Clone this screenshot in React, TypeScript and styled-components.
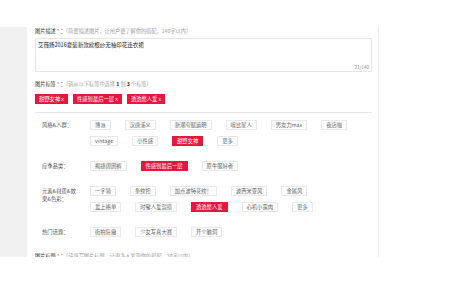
import styled, { createGlobalStyle } from "styled-components";

const GlobalStyle = createGlobalStyle`
    html, body {
        margin: 0;
        padding: 0;
        background: #ffffff;
    }
    body {
        font-family: "Noto Sans CJK SC", "Noto Sans", sans-serif;
        color: #444444;
    }
`;

const Page = styled.div`
    padding-top: 27px;
`;

const Frame = styled.div`
    display: flex;
    width: 379px;
    height: 230px;
    overflow: hidden;
`;

const Sidebar = styled.div`
    width: 27px;
    flex-shrink: 0;
    background-color: #f1f1f1;
`;

const Main = styled.div`
    flex: 1;
    padding: 0 6px 0 8px;
    border-right: 1px solid #ececec;
    box-sizing: border-box;
`;

const FieldLabel = styled.div<{ $top?: number }>`
    margin-top: ${(p) => p.$top ?? 0}px;
    font-size: 5.2px;
    line-height: 8px;
    color: #333333;
    white-space: nowrap;
`;

const Star = styled.span`
    color: #e4393c;
`;

const Hint = styled.span`
    color: #a0a0a0;
`;

const Strong = styled.b`
    color: #222222;
`;

const TextBox = styled.div`
    margin-top: 3px;
    height: 34px;
    border: 1px solid #e6e6e6;
    box-sizing: border-box;
    padding: 2px 2px 1px 2px;
    display: flex;
    flex-direction: column;
    justify-content: space-between;
`;

const BoxText = styled.div`
    font-size: 5.5px;
    line-height: 8px;
    color: #222222;
`;

const Counter = styled.div`
    align-self: flex-end;
    font-size: 4.6px;
    line-height: 6px;
    color: #888888;
`;

const Picked = styled.div`
    display: flex;
    gap: 5px;
    margin-top: 6px;
    padding-bottom: 8px;
    border-bottom: 1px solid #e8e8e8;
`;

const Tag = styled.span<{ $on?: boolean; $more?: boolean }>`
    display: inline-flex;
    align-items: center;
    height: 10px;
    padding: 0 4px;
    box-sizing: border-box;
    border: 1px solid ${(p) => (p.$on ? "#e5173f" : "#e9e9e9")};
    background-color: ${(p) => (p.$on ? "#e5173f" : "#ffffff")};
    color: ${(p) => (p.$on ? "#ffffff" : p.$more ? "#5a7fb8" : "#5c5c5c")};
    font-size: 5.3px;
    white-space: nowrap;
`;

const PickedTag = styled(Tag)`
    padding: 0 3px;
`;

const Sections = styled.div`
    display: flex;
    flex-direction: column;
    gap: 15px;
    margin-top: 7px;
    padding-left: 7px;
`;

const Section = styled.div`
    display: flex;
    align-items: flex-start;
`;

const SectionLabel = styled.div`
    width: 48px;
    flex-shrink: 0;
    padding-top: 1px;
    font-size: 5.3px;
    line-height: 8px;
    color: #555555;
`;

const TagRows = styled.div`
    display: flex;
    flex-direction: column;
    gap: 6px;
`;

const TagRow = styled.div`
    display: flex;
    gap: 14px;
`;

const sections: { label: React.ReactNode; rows: { t: string; on?: boolean; more?: boolean }[][] }[] = [
    {
        label: "风格&人群：",
        rows: [
            [{ t: "博派" }, { t: "汉唐溪义" }, { t: "新潮夸赋运明" }, { t: "嘻比星人" }, { t: "男友力max" }, { t: "夜店咖" }],
            [{ t: "vintage" }, { t: "小性感" }, { t: "甜野女神", on: true }, { t: "更多", more: true }],
        ],
    },
    {
        label: "应季品类：",
        rows: [[{ t: "揭捷阔因裤" }, { t: "性感到最后一层", on: true }, { t: "原牛服好者" }]],
    },
    {
        label: (
            <>
                元素&材质&效
                <br />
                果&色彩：
            </>
        ),
        rows: [
            [{ t: "一字领" }, { t: "条纹控" }, { t: "加点波特花纹！" }, { t: "波西米亚风" }, { t: "金属风" }],
            [{ t: "爱上格单" }, { t: "时髦人爱混搭" }, { t: "透透愁人爱", on: true }, { t: "心机小露肉" }, { t: "更多", more: true }],
        ],
    },
    {
        label: "热门话题：",
        rows: [[{ t: "街拍狂魔" }, { t: "少女写真大赛" }, { t: "开个脑洞" }]],
    },
];

function App() {
    return (
        <Page>
            <GlobalStyle />
            <Frame>
                <Sidebar />
                <Main>
                    <FieldLabel>
                        图片描述 <Star>*</Star> ：<Hint>（简要描述图片，让用户更了解你的搭配，140字以内）</Hint>
                    </FieldLabel>
                    <TextBox>
                        <BoxText>艾薇扬2016夏装新款欧根纱无袖印花连衣裙</BoxText>
                        <Counter>21/140</Counter>
                    </TextBox>

                    <FieldLabel $top={8}>
                        图片标签 <Star>*</Star> ：<Hint>（请从以下标签中选择 <Strong>1</Strong> 到 <Strong>3</Strong> 个标签）</Hint>
                    </FieldLabel>
                    <Picked>
                        <PickedTag $on>甜野女神 x</PickedTag>
                        <PickedTag $on>性感到最后一层 x</PickedTag>
                        <PickedTag $on>透透愁人爱 x</PickedTag>
                    </Picked>

                    <Sections>
                        {sections.map((s, i) => (
                            <Section key={i}>
                                <SectionLabel>{s.label}</SectionLabel>
                                <TagRows>
                                    {s.rows.map((row, j) => (
                                        <TagRow key={j}>
                                            {row.map((tag) => (
                                                <Tag key={tag.t} $on={tag.on} $more={tag.more}>
                                                    {tag.t}
                                                </Tag>
                                            ))}
                                        </TagRow>
                                    ))}
                                </TagRows>
                            </Section>
                        ))}
                    </Sections>

                    <FieldLabel $top={15}>
                        图片标题 <Star>*</Star> ：<Hint>（请填写图片标题，让更多人发现你的搭配，30字以内）</Hint>
                    </FieldLabel>
                </Main>
            </Frame>
        </Page>
    );
}

export default App;
